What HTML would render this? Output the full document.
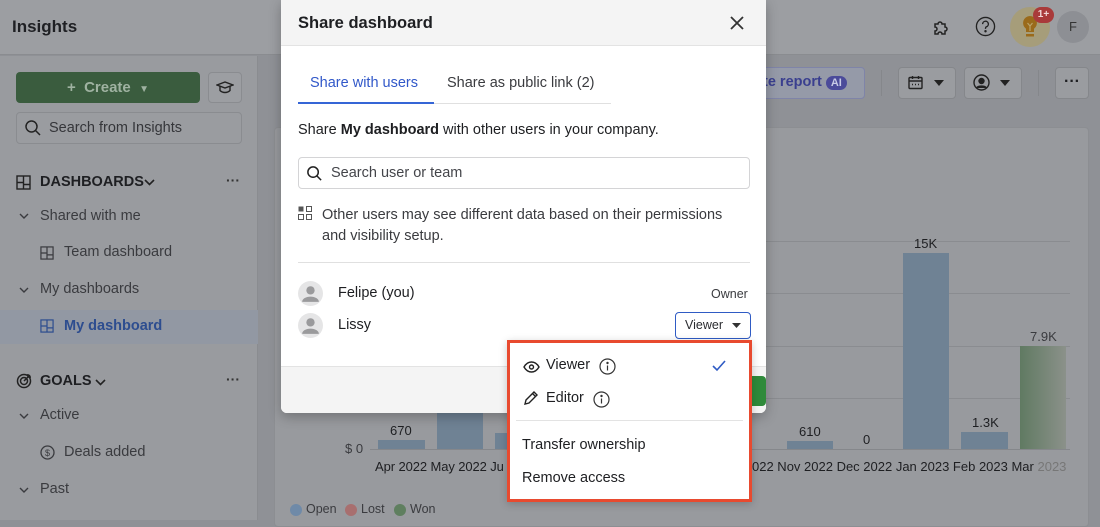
<!DOCTYPE html>
<html><head><meta charset="utf-8"><style>
*{box-sizing:border-box;margin:0;padding:0}
body{width:1100px;height:520px;overflow:hidden;position:relative;font-family:"Liberation Sans",sans-serif;background:#8f9196;color:#1e1f22}
.a{position:absolute}
.t{white-space:nowrap}
</style></head><body>
<!-- top header -->
<div class="a" style="left:0;top:0;width:1100px;height:55px;background:#9c9ea2;border-bottom:1px solid #8a8c90"></div>
<div class="a t" style="left:12px;top:17px;font-size:17px;font-weight:bold;color:#1f2024">Insights</div>
<svg class="a" style="left:930px;top:15px" width="24" height="24" viewBox="0 0 24 24" fill="none" stroke="#222" stroke-width="1.5"><path d="M5 9h3a2 2 0 1 1 4 0h3v3a2 2 0 1 1 0 4v3h-3a2 2 0 1 0-4 0H5v-3a2 2 0 1 0 0-4z"/></svg>
<svg class="a" style="left:975px;top:16px" width="21" height="21" viewBox="0 0 22 22" fill="none" stroke="#222" stroke-width="1.4"><circle cx="11" cy="11" r="9.5"/><path d="M8 8.5a3 3 0 1 1 4 2.8c-.7.3-1 .8-1 1.5v.7"/><circle cx="11" cy="16" r=".6" fill="#222"/></svg>
<div class="a" style="left:1010px;top:7px;width:40px;height:40px;border-radius:50%;background:#a69d7a"></div>
<svg class="a" style="left:1020px;top:15px" width="20" height="24" viewBox="0 0 20 24"><path d="M10 1a7 7 0 0 0-4 12.7V17h8v-3.3A7 7 0 0 0 10 1z" fill="#9a6a1a"/><rect x="6" y="19" width="8" height="2.5" fill="#9a6a1a"/><path d="M7.5 8l2.5 3 2.5-3M10 11v5" stroke="#b8a36a" stroke-width="1.2" fill="none"/></svg>
<div class="a t" style="left:1033px;top:7px;width:21px;height:16px;border-radius:8px;background:#a93a3a;color:#f0d8d8;font-size:10px;font-weight:bold;text-align:center;line-height:16px">1+</div>
<div class="a" style="left:1057px;top:11px;width:32px;height:32px;border-radius:50%;background:#8d8f94;color:#333;font-size:13px;text-align:center;line-height:32px">F</div>
<!-- sidebar -->
<div class="a" style="left:0;top:56px;width:258px;height:464px;background:#999b9f;border-right:1px solid #8a8c90"></div>
<div class="a t" style="left:16px;top:72px;width:184px;height:31px;border-radius:4px;background:#3a5c3e;color:#9fb2a1;font-size:15px;font-weight:bold;text-align:center;line-height:31px">+&nbsp; Create &nbsp;<span style="font-size:10px">▼</span></div>
<div class="a" style="left:208px;top:72px;width:34px;height:31px;border-radius:4px;border:1px solid #8a8c90;background:#9c9ea2"></div>
<svg class="a" style="left:216px;top:80px" width="18" height="16" viewBox="0 0 18 16" fill="none" stroke="#222" stroke-width="1.4"><path d="M1 5l8-3 8 3-8 3z"/><path d="M4 6.5v4c1.5 1.5 3 2 5 2s3.5-.5 5-2v-4"/></svg>
<div class="a" style="left:16px;top:112px;width:226px;height:32px;border-radius:4px;border:1px solid #8a8c90;background:#9a9ca0"></div>
<svg class="a" style="left:24px;top:119px" width="18" height="18" viewBox="0 0 18 18" fill="none" stroke="#222" stroke-width="1.5"><circle cx="7.5" cy="7.5" r="5.5"/><path d="M11.5 11.5l4.5 4.5"/></svg>
<div class="a t" style="left:49px;top:120px;font-size:14.5px;color:#35363a">Search from Insights</div>
<svg class="a" style="left:16px;top:175px" width="15" height="15" viewBox="0 0 15 15" fill="none" stroke="#222" stroke-width="1.4"><rect x="1" y="1" width="13" height="13"/><path d="M7.5 1v13M1 7.5h6.5M7.5 9.5H14"/></svg>
<div class="a t" style="left:40px;top:174px;font-size:14.5px;font-weight:bold;color:#1e1f22">DASHBOARDS</div>
<svg class="a" style="left:144px;top:179px" width="11" height="7" viewBox="0 0 11 7" fill="none" stroke="#222" stroke-width="1.6"><path d="M1 1l4.5 4.5L10 1"/></svg>
<div class="a t" style="left:226px;top:172px;font-size:14px;font-weight:bold;color:#333">···</div>
<svg class="a" style="left:19px;top:213px" width="10" height="6" viewBox="0 0 10 6" fill="none" stroke="#3a3b3f" stroke-width="1.4"><path d="M1 1l4 4 4-4"/></svg>
<div class="a t" style="left:40px;top:208px;font-size:14.5px;color:#3a3b3f">Shared with me</div>
<svg class="a" style="left:40px;top:246px" width="14" height="14" viewBox="0 0 15 15" fill="none" stroke="#3a3b3f" stroke-width="1.3"><rect x="1" y="1" width="13" height="13"/><path d="M7.5 1v13M1 7.5h6.5M7.5 9.5H14"/></svg>
<div class="a t" style="left:64px;top:244px;font-size:14.5px;color:#3a3b3f">Team dashboard</div>
<svg class="a" style="left:19px;top:287px" width="10" height="6" viewBox="0 0 10 6" fill="none" stroke="#3a3b3f" stroke-width="1.4"><path d="M1 1l4 4 4-4"/></svg>
<div class="a t" style="left:40px;top:281px;font-size:14.5px;color:#3a3b3f">My dashboards</div>
<div class="a" style="left:0;top:310px;width:258px;height:34px;background:#9298a3"></div>
<svg class="a" style="left:40px;top:319px" width="14" height="14" viewBox="0 0 15 15" fill="none" stroke="#2d4d8f" stroke-width="1.3"><rect x="1" y="1" width="13" height="13"/><path d="M7.5 1v13M1 7.5h6.5M7.5 9.5H14"/></svg>
<div class="a t" style="left:64px;top:318px;font-size:14.5px;font-weight:bold;color:#2d4d8f">My dashboard</div>
<svg class="a" style="left:16px;top:373px" width="16" height="16" viewBox="0 0 16 16" fill="none" stroke="#222" stroke-width="1.5"><circle cx="8" cy="8" r="6.5"/><circle cx="8" cy="8" r="3.5"/><path d="M8 8l6-6M12 1v3h3"/></svg>
<div class="a t" style="left:40px;top:373px;font-size:14.5px;font-weight:bold;color:#1e1f22">GOALS</div>
<svg class="a" style="left:95px;top:379px" width="11" height="7" viewBox="0 0 11 7" fill="none" stroke="#222" stroke-width="1.6"><path d="M1 1l4.5 4.5L10 1"/></svg>
<div class="a t" style="left:226px;top:371px;font-size:14px;font-weight:bold;color:#333">···</div>
<svg class="a" style="left:19px;top:413px" width="10" height="6" viewBox="0 0 10 6" fill="none" stroke="#3a3b3f" stroke-width="1.4"><path d="M1 1l4 4 4-4"/></svg>
<div class="a t" style="left:40px;top:407px;font-size:14.5px;color:#3a3b3f">Active</div>
<svg class="a" style="left:40px;top:445px" width="15" height="15" viewBox="0 0 15 15" fill="none" stroke="#3a3b3f" stroke-width="1.3"><circle cx="7.5" cy="7.5" r="6.5"/><text x="7.5" y="11" font-size="9" text-anchor="middle" fill="#3a3b3f" stroke="none" font-family="Liberation Sans">$</text></svg>
<div class="a t" style="left:64px;top:444px;font-size:14.5px;color:#3a3b3f">Deals added</div>
<svg class="a" style="left:19px;top:487px" width="10" height="6" viewBox="0 0 10 6" fill="none" stroke="#3a3b3f" stroke-width="1.4"><path d="M1 1l4 4 4-4"/></svg>
<div class="a t" style="left:40px;top:481px;font-size:14.5px;color:#3a3b3f">Past</div>
<!-- toolbar -->
<div class="a" style="left:740px;top:67px;width:125px;height:32px;border-radius:4px;border:1px solid #7f84a8;background:#959aa8"></div>
<div class="a t" style="left:763px;top:74px;font-size:14.5px;font-weight:bold;color:#3a3f8f">te report <span style="background:#4b4b9a;color:#c9cbe6;border-radius:8px;padding:1px 5px;font-size:11px">AI</span></div>
<div class="a" style="left:881px;top:70px;width:1px;height:26px;background:#85878b"></div>
<div class="a" style="left:898px;top:67px;width:58px;height:32px;border-radius:4px;border:1px solid #85878b;background:#9a9ca0"></div>
<svg class="a" style="left:908px;top:75px" width="15" height="15" viewBox="0 0 15 15" fill="none" stroke="#222" stroke-width="1.4"><rect x="1" y="2.5" width="13" height="11" rx="1"/><path d="M1 6h13M4.5 1v3M10.5 1v3M4 9.5h1M7 9.5h1M10 9.5h1"/></svg>
<svg class="a" style="left:934px;top:80px" width="10" height="6" viewBox="0 0 10 6"><path d="M0 0h10L5 6z" fill="#222"/></svg>
<div class="a" style="left:964px;top:67px;width:58px;height:32px;border-radius:4px;border:1px solid #85878b;background:#9a9ca0"></div>
<svg class="a" style="left:973px;top:74px" width="17" height="17" viewBox="0 0 17 17" fill="none" stroke="#222" stroke-width="1.4"><circle cx="8.5" cy="8.5" r="7.5"/><circle cx="8.5" cy="7" r="2.5" fill="#222"/><path d="M3.5 14c1.5-2.5 8.5-2.5 10 0" fill="#222"/></svg>
<svg class="a" style="left:1000px;top:80px" width="10" height="6" viewBox="0 0 10 6"><path d="M0 0h10L5 6z" fill="#222"/></svg>
<div class="a" style="left:1038px;top:70px;width:1px;height:26px;background:#85878b"></div>
<div class="a" style="left:1055px;top:67px;width:34px;height:32px;border-radius:4px;border:1px solid #85878b;background:#9a9ca0;text-align:center;line-height:28px;font-weight:bold">···</div>
<!-- chart card -->
<div class="a" style="left:274px;top:127px;width:815px;height:400px;border-radius:4px;background:#989a9e;border:1px solid #8c8e92"></div>
<div class="a" style="left:370px;top:241px;width:700px;height:1px;background:#8a8c90"></div>
<div class="a" style="left:370px;top:293px;width:700px;height:1px;background:#8a8c90"></div>
<div class="a" style="left:370px;top:346px;width:700px;height:1px;background:#8a8c90"></div>
<div class="a" style="left:370px;top:398px;width:700px;height:1px;background:#8a8c90"></div>
<div class="a" style="left:370px;top:449px;width:700px;height:1px;background:#85878b"></div>
<div class="a t" style="left:345px;top:441px;font-size:13px;color:#3a3b3f">$ 0</div>
<div class="a" style="left:378px;top:440px;width:47px;height:9px;background:#6f8294"></div>
<div class="a t" style="left:390px;top:423px;font-size:13px;color:#1e1f22">670</div>
<div class="a" style="left:437px;top:413px;width:46px;height:36px;background:#6f8294"></div>
<div class="a" style="left:495px;top:433px;width:20px;height:16px;background:#6f8294"></div>
<div class="a" style="left:787px;top:441px;width:46px;height:8px;background:#6f8294"></div>
<div class="a t" style="left:799px;top:424px;font-size:13px;color:#1e1f22">610</div>
<div class="a t" style="left:863px;top:432px;font-size:13px;color:#1e1f22">0</div>
<div class="a" style="left:903px;top:253px;width:46px;height:196px;background:#6f8294"></div>
<div class="a t" style="left:914px;top:236px;font-size:13px;color:#1e1f22">15K</div>
<div class="a" style="left:961px;top:432px;width:47px;height:17px;background:#6f8294"></div>
<div class="a t" style="left:972px;top:415px;font-size:13px;color:#1e1f22">1.3K</div>
<div class="a" style="left:1020px;top:346px;width:46px;height:103px;background:linear-gradient(90deg,#607a62,#8b918a)"></div>
<div class="a t" style="left:1030px;top:329px;font-size:13px;color:#3a3b3f">7.9K</div>
<div class="a t" style="left:375px;top:459px;font-size:13px;color:#1e1f22;letter-spacing:-.1px">Apr 2022 May 2022 Ju</div>
<div class="a t" style="left:752px;top:459px;font-size:13px;color:#1e1f22">022 Nov 2022 Dec 2022 Jan 2023 Feb 2023 Mar <span style="color:#777">2023</span></div>
<div class="a" style="left:290px;top:504px;width:12px;height:12px;border-radius:50%;background:#6f8aa8"></div>
<div class="a t" style="left:306px;top:502px;font-size:12.5px;color:#3a3b3f">Open</div>
<div class="a" style="left:345px;top:504px;width:12px;height:12px;border-radius:50%;background:#a86f6f"></div>
<div class="a t" style="left:361px;top:502px;font-size:12.5px;color:#3a3b3f">Lost</div>
<div class="a" style="left:394px;top:504px;width:12px;height:12px;border-radius:50%;background:#5f7f5f"></div>
<div class="a t" style="left:410px;top:502px;font-size:12.5px;color:#3a3b3f">Won</div>
<!-- modal -->
<div class="a" style="left:281px;top:0;width:485px;height:413px;background:#fff;border-radius:0 0 6px 6px;box-shadow:0 4px 12px rgba(0,0,0,.25);overflow:hidden">
 <div class="a" style="left:0;top:0;width:485px;height:46px;background:#f4f4f4;border-bottom:1px solid #e3e3e3"></div>
 <div class="a t" style="left:17px;top:14px;font-size:16.5px;font-weight:bold;color:#1e1f22">Share dashboard</div>
 <svg class="a" style="left:449px;top:16px" width="14" height="14" viewBox="0 0 14 14" stroke="#333" stroke-width="1.8"><path d="M1 1l12 12M13 1L1 13"/></svg>
 <div class="a" style="left:17px;top:103px;width:313px;height:1px;background:#e0e0e0"></div>
 <div class="a" style="left:17px;top:102px;width:136px;height:2px;background:#3565d6"></div>
 <div class="a t" style="left:29px;top:75px;font-size:14.5px;color:#3158c9">Share with users</div>
 <div class="a t" style="left:166px;top:75px;font-size:14.5px;color:#3a3b3f">Share as public link (2)</div>
 <div class="a t" style="left:17px;top:122px;font-size:14.5px;color:#1e1f22">Share <b>My dashboard</b> with other users in your company.</div>
 <div class="a" style="left:17px;top:157px;width:452px;height:32px;border:1px solid #d4d4d6;border-radius:4px"></div>
 <svg class="a" style="left:25px;top:165px" width="17" height="17" viewBox="0 0 18 18" fill="none" stroke="#222" stroke-width="1.6"><circle cx="7.5" cy="7.5" r="5.5"/><path d="M11.5 11.5l4.5 4.5"/></svg>
 <div class="a t" style="left:50px;top:165px;font-size:14.5px;color:#44454a">Search user or team</div>
 <svg class="a" style="left:17px;top:206px" width="14" height="14" viewBox="0 0 14 14"><rect x="0.5" y="0.5" width="5" height="5" fill="#555"/><rect x="8.5" y="0.5" width="5" height="5" fill="none" stroke="#555"/><rect x="0.5" y="8.5" width="5" height="5" fill="none" stroke="#555"/><rect x="8.5" y="8.5" width="5" height="5" fill="none" stroke="#555"/></svg>
 <div class="a" style="left:41px;top:205px;font-size:14.5px;line-height:21px;color:#3a3b3f;width:422px">Other users may see different data based on their permissions and visibility setup.</div>
 <div class="a" style="left:17px;top:262px;width:452px;height:1px;background:#e0e0e0"></div>
 <svg class="a" style="left:17px;top:281px" width="25" height="25" viewBox="0 0 24 24"><circle cx="12" cy="12" r="12" fill="#e5e5e6"/><circle cx="12" cy="9" r="4" fill="#9a9a9c"/><path d="M4 20a8 5 0 0 1 16 0z" fill="#9a9a9c"/></svg>
 <div class="a t" style="left:57px;top:285px;font-size:14.5px;color:#1e1f22">Felipe (you)</div>
 <div class="a t" style="left:430px;top:287px;font-size:12.5px;color:#3a3b3f">Owner</div>
 <svg class="a" style="left:17px;top:313px" width="25" height="25" viewBox="0 0 24 24"><circle cx="12" cy="12" r="12" fill="#e5e5e6"/><circle cx="12" cy="9" r="4" fill="#9a9a9c"/><path d="M4 20a8 5 0 0 1 16 0z" fill="#9a9a9c"/></svg>
 <div class="a t" style="left:57px;top:317px;font-size:14.5px;color:#1e1f22">Lissy</div>
 <div class="a t" style="left:394px;top:312px;width:76px;height:27px;border:1.5px solid #2f5bc4;border-radius:4px;font-size:12.5px;color:#2a2b2f;line-height:24px;padding-left:9px">Viewer</div>
 <svg class="a" style="left:451px;top:323px" width="9" height="5" viewBox="0 0 9 5"><path d="M0 0h9L4.5 5z" fill="#333"/></svg>
 <div class="a" style="left:0;top:366px;width:485px;height:47px;background:#f4f4f4;border-top:1px solid #e3e3e3"></div>
 <div class="a" style="left:455px;top:376px;width:30px;height:30px;background:#2f8a3a;border-radius:4px"></div>
</div>
<!-- dropdown -->
<div class="a" style="left:507px;top:340px;width:245px;height:162px;background:#fff;border:3px solid #e84a2f;box-shadow:0 2px 8px rgba(0,0,0,.2)">
 <svg class="a" style="left:13px;top:18px" width="17" height="12" viewBox="0 0 17 12" fill="none" stroke="#222" stroke-width="1.4"><path d="M1 6c2-3.5 4.5-5 7.5-5s5.5 1.5 7.5 5c-2 3.5-4.5 5-7.5 5S3 9.5 1 6z"/><circle cx="8.5" cy="6" r="2"/></svg>
 <div class="a t" style="left:36px;top:14px;font-size:14.5px;color:#1e1f22">Viewer</div>
 <svg class="a" style="left:89px;top:15px" width="17" height="17" viewBox="0 0 17 17" fill="none" stroke="#333" stroke-width="1.2"><circle cx="8.5" cy="8.5" r="7.5"/><path d="M8.5 7.5v5"/><circle cx="8.5" cy="5" r=".6" fill="#333"/></svg>
 <svg class="a" style="left:202px;top:17px" width="14" height="12" viewBox="0 0 14 12" fill="none" stroke="#2f5bc4" stroke-width="1.6"><path d="M1 6l4 4 8-9"/></svg>
 <svg class="a" style="left:13px;top:47px" width="16" height="16" viewBox="0 0 16 16" fill="none" stroke="#222" stroke-width="1.4"><path d="M2 14l1-4 8-8 3 3-8 8z M9.5 3.5l3 3"/></svg>
 <div class="a t" style="left:36px;top:47px;font-size:14.5px;color:#1e1f22">Editor</div>
 <svg class="a" style="left:83px;top:48px" width="17" height="17" viewBox="0 0 17 17" fill="none" stroke="#333" stroke-width="1.2"><circle cx="8.5" cy="8.5" r="7.5"/><path d="M8.5 7.5v5"/><circle cx="8.5" cy="5" r=".6" fill="#333"/></svg>
 <div class="a" style="left:6px;top:77px;width:227px;height:1px;background:#e3e3e3"></div>
 <div class="a t" style="left:12px;top:94px;font-size:14.5px;color:#1e1f22">Transfer ownership</div>
 <div class="a t" style="left:12px;top:127px;font-size:14.5px;color:#1e1f22">Remove access</div>
</div>
</body></html>
